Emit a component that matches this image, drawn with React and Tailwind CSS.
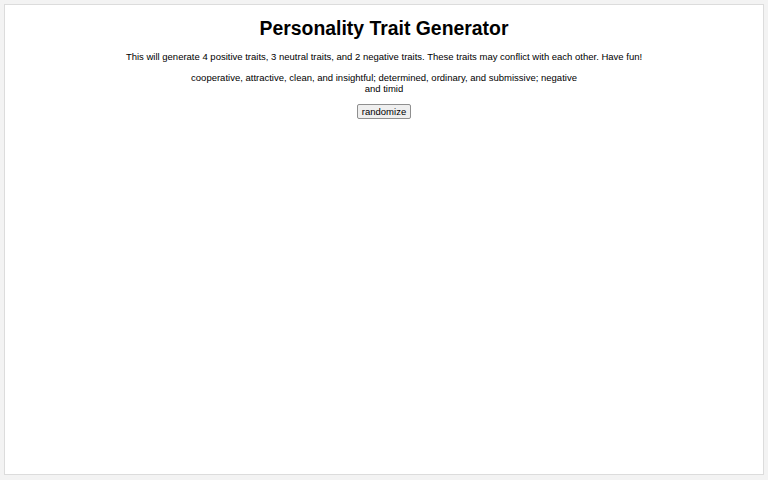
import { useState } from 'react'

const POSITIVE = ['cooperative', 'attractive', 'clean', 'insightful', 'honest', 'brave', 'kind', 'loyal', 'patient', 'witty']
const NEUTRAL = ['determined', 'ordinary', 'submissive', 'quiet', 'formal', 'curious', 'reserved']
const NEGATIVE = ['negative', 'timid', 'rude', 'lazy', 'greedy', 'vain', 'moody']

function joinList(list) {
  if (list.length < 2) return list.join('')
  if (list.length === 2) return list[0] + ' and ' + list[1]
  return list.slice(0, -1).join(', ') + ', and ' + list[list.length - 1]
}

function pick(list, n) {
  const copy = [...list]
  const out = []
  while (out.length < n && copy.length) {
    out.push(copy.splice(Math.floor(Math.random() * copy.length), 1)[0])
  }
  return out
}

export default function App() {
  const [traits, setTraits] = useState({
    pos: ['cooperative', 'attractive', 'clean', 'insightful'],
    neu: ['determined', 'ordinary', 'submissive'],
    neg: ['negative', 'timid'],
  })

  const randomize = () => {
    setTraits({ pos: pick(POSITIVE, 4), neu: pick(NEUTRAL, 3), neg: pick(NEGATIVE, 2) })
  }

  return (
    <div className="w-[768px] h-[480px] bg-[#f3f3f3] p-[4px] font-['Liberation_Sans',Arial,sans-serif] text-black">
      <div className="h-[471px] bg-white border border-[#dcdcdc] flex flex-col items-center pt-[11px]">
        <h1 className="text-[19.4px] font-bold leading-[24px]">Personality Trait Generator</h1>
        <p className="text-[9.5px] leading-[12px] mt-[11px]">
          This will generate 4 positive traits, 3 neutral traits, and 2 negative traits. These traits may conflict with each other. Have fun!
        </p>
        <p className="text-[9.5px] leading-[11px] mt-[9px] w-[400px] text-center">
          {joinList(traits.pos)}; {joinList(traits.neu)}; {joinList(traits.neg)}
        </p>
        <button
          onClick={randomize}
          className="mt-[10px] text-[9.5px] leading-[13px] px-[4px] bg-[#efefef] border border-[#8f8f8f] rounded-[2px]"
        >
          randomize
        </button>
      </div>
    </div>
  )
}
